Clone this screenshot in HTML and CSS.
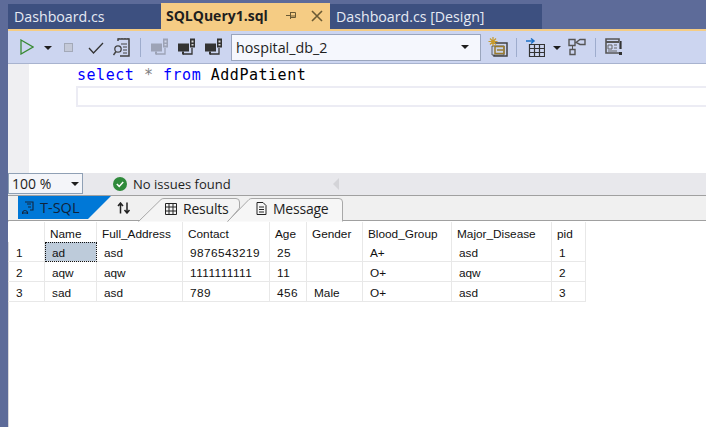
FILE: index.html
```html
<!DOCTYPE html>
<html lang="en">
<head>
<meta charset="utf-8">
<title>SQLQuery1.sql</title>
<link rel="stylesheet" href="styles.css">
</head>
<body>
<div class="shell">
  <div class="tabs">
    <div class="tab t1">Dashboard.cs</div>
    <div class="tab active t2"><span class="tname">SQLQuery1.sql</span>
      <svg class="pin" width="11" height="9" viewBox="0 0 11 9"><path d="M0 4.5h4M4.5 1v7M4.5 1.500h5v5h-5M4.5 5h5" fill="none" stroke="#6a5a34"/></svg>
      <svg class="close" width="12" height="12" viewBox="0 0 12 12"><path d="M1 1l10 10M11 1L1 11" fill="none" stroke="#6a5a34" stroke-width="1.600"/></svg>
    </div>
    <div class="tab t3">Dashboard.cs [Design]</div>
  </div>
  <div class="toolbar">
    <svg class="run" width="14" height="16" viewBox="0 0 14 16"><path d="M1 1l12 7-12 7z" fill="none" stroke="#388a34" stroke-width="1.300"/></svg>
    <span class="caret c1"></span>
    <span class="stop"></span>
    <svg class="check" width="16" height="12" viewBox="0 0 16 12"><path d="M1 6l4.500 5L15 1" fill="none" stroke="#333" stroke-width="1.300"/></svg>
    <svg class="parse" width="17" height="19" viewBox="0 0 17 19"><path d="M5 3V1h11v17H7" fill="none" stroke="#424242" stroke-width="1.500"/><path d="M6 1V0M9 1V0M12 1V0M15 1V0" stroke="#424242"/><path d="M8 6h6M10 9h4M10 12h4M10 15h4" stroke="#424242"/><circle cx="5" cy="11" r="3.200" fill="none" stroke="#424242" stroke-width="1.300"/><path d="M3 13.500L.5 17" stroke="#424242" stroke-width="1.500"/></svg>
    <span class="sep s1"></span>
    <svg class="conn dim" width="19" height="18" viewBox="0 0 19 18"><use href="#plug"/></svg>
    <svg class="conn" width="19" height="18" viewBox="0 0 19 18"><use href="#plug"/></svg>
    <svg class="conn" width="19" height="18" viewBox="0 0 19 18"><use href="#plug"/></svg>
    <div class="dbselect"><span>hospital_db_2</span><span class="caret"></span></div>
    <svg class="newq" width="20" height="20" viewBox="0 0 20 20"><path d="M7 6h12v13H6V9" fill="none" stroke="#424242" stroke-width="1.500"/><path d="M4 9h12v9H4z" fill="#c8d3ec" stroke="#424242" stroke-opacity=".8"/><path d="M7 9.500h9v7H7z" fill="none" stroke="#9a7b2c" stroke-width="1.500"/><path d="M9 13h6" stroke="#9a7b2c" stroke-width="1.500"/><path d="M5 0v9M.5 4.500h9M2 1.500l6 6M8 1.500l-6 6" stroke="#c79a2b" stroke-width="1.200"/></svg>
    <span class="sep s2"></span>
    <svg class="grid-ic" width="19" height="19" viewBox="0 0 19 19"><path d="M3.500 6.500h15v12h-15zM3.500 10.500h15M3.500 14.500h15M8.500 6.500v12M13.500 6.500v12" fill="none" stroke="#333" stroke-width="1.200"/><path d="M0 3h7M5 .5L8 3 5 5.500" fill="none" stroke="#1e72c8" stroke-width="1.500"/></svg>
    <span class="caret c2"></span>
    <svg class="plan" width="18" height="18" viewBox="0 0 18 18"><path d="M1 1.500h6v6H1zM2 11.500h5v5H2z" fill="none" stroke="#555" stroke-width="1.400"/><path d="M4.500 8v3" stroke="#555"/><path d="M8 4.500l4-3h5v5h-5z" fill="none" stroke="#555" stroke-width="1.400"/></svg>
    <span class="sep s3"></span>
    <svg class="opts" width="18" height="18" viewBox="0 0 18 18"><path d="M14 3V1H1v14h13" fill="none" stroke="#555" stroke-width="1.600"/><path d="M1 4h13" stroke="#555" stroke-width="2"/><path d="M3 7h4v4H3zM9 7h3M9 10h3M3 13h9" fill="none" stroke="#666"/><path d="M15.500 3v8" stroke="#333" stroke-width="2.200"/><path d="M14 14h3v3h-3z" fill="#333"/></svg>
  </div>
  <div class="editor">
    <div class="gutter"></div>
    <div class="code">
      <div class="codeline"><span class="kw">select</span> <span class="star">*</span> <span class="kw">from</span> AddPatient</div>
      <div class="current"></div>
    </div>
  </div>
  <div class="status">
    <div class="zoomsel"><span>100 %</span><span class="caret"></span></div>
    <svg class="ok" width="14" height="14" viewBox="0 0 14 14"><circle cx="7" cy="7" r="7" fill="#2f8a3b"/><path d="M3.800 7l2.400 2.400L10.200 5" fill="none" stroke="#fff" stroke-width="1.500"/></svg>
    <span class="issues">No issues found</span>
    <span class="scroll-left"></span>
  </div>
  <div class="resulttabs">
    <div class="tsql">
      <svg width="13" height="13" viewBox="0 0 13 13"><path d="M3 1h8v8H8M1 12h5M3 9.500a2.500 2.500 0 1 0 .1 0M5 3h4M6 6h3" fill="none" stroke="#12263f" stroke-width="1.100"/></svg>
      <span>T-SQL</span>
    </div>
    <svg class="sort" width="14" height="12" viewBox="0 0 14 12"><path d="M3.500 11.500V1.500M1 4l2.500-3L6 4M10 .5v10M7.500 8l2.500 3 2.500-3" fill="none" stroke="#222" stroke-width="1.500"/></svg>
    <div class="rtab results">
      <svg class="tabshape" width="102" height="26" viewBox="0 0 102 26"><path d="M.5 25.500L23 3.500Q24 2.500 26 2.500H98Q101.500 2.500 101.500 6V12L90 25.500" fill="#f4f4f4" stroke="#a8a8a8"/></svg>
      <svg class="tabicon" width="12" height="12" viewBox="0 0 12 12"><path d="M.5.500h11v11H.5zM.5 4h11M.5 8h11M4 .5v11M8 .5v11" fill="none" stroke="#222"/></svg>
      <span>Results</span>
    </div>
    <div class="rtab message">
      <svg class="tabshape" width="116" height="26" viewBox="0 0 116 26"><path d="M.5 25.500L22 3.500Q23 2.500 25 2.500H112Q115.500 2.500 115.500 6V25.500" fill="#f6f6f6" stroke="#a8a8a8"/></svg>
      <svg class="tabicon" width="11" height="13" viewBox="0 0 11 13"><path d="M1 .5h6l3 3v9H1zM3 5h5M3 7.500h5M3 10h5" fill="none" stroke="#222"/></svg>
      <span>Message</span>
    </div>
  </div>
  <div class="tablewrap">
    <table class="data">
      <colgroup><col class="k0"><col class="k1"><col class="k2"><col class="k3"><col class="k4"><col class="k5"><col class="k6"><col class="k7"><col class="k8"></colgroup>
      <thead><tr><th></th><th>Name</th><th>Full_Address</th><th>Contact</th><th>Age</th><th>Gender</th><th>Blood_Group</th><th>Major_Disease</th><th>pid</th></tr></thead>
      <tbody>
        <tr><td class="num d">1</td><td class="sel">ad</td><td>asd</td><td class="d">9876543219</td><td class="d">25</td><td></td><td>A+</td><td>asd</td><td class="d">1</td></tr>
        <tr><td class="num d">2</td><td>aqw</td><td>aqw</td><td class="d">1111111111</td><td class="d">11</td><td></td><td>O+</td><td>aqw</td><td class="d">2</td></tr>
        <tr><td class="num d">3</td><td>sad</td><td>asd</td><td class="d">789</td><td class="d">456</td><td>Male</td><td>O+</td><td>asd</td><td class="d">3</td></tr>
      </tbody>
    </table>
  </div>
</div>
<svg class="defs" width="0" height="0"><defs><g id="plug"><path d="M1 5.500h11v8H1z" fill="currentColor"/><path d="M6 13.500v3" stroke="currentColor" stroke-width="2"/><path d="M6 16h9v-6" fill="none" stroke="currentColor" stroke-width="1.300"/><path d="M13 .5h5v9h-5z" fill="currentColor"/><path d="M14.500 2.500h2v2h-2zM14.500 6h2v1.500h-2z" fill="#fff" fill-opacity=".8"/></g></defs></svg>
</body>
</html>
```
FILE: styles.css
```css
* { box-sizing: border-box; }
html, body { margin: 0; padding: 0; width: 706px; height: 427px; overflow: hidden; background: #5d6b99; }
.shell { margin-left: 8px; height: 427px; background: #fff; display: flex; flex-direction: column; font-family: "Open Sans", "Noto Sans", sans-serif; color: #1e1e1e; }
.defs { position: absolute; }

.tabs { height: 31px; flex: none; background: #5d6b99; display: flex; align-items: flex-end; border-bottom: 2px solid #f5cc84; }
.tab { height: 25px; display: flex; align-items: center; padding-bottom: 1px; font-size: 14.2px; color: #e6eaf3; background: #3d5080; padding-left: 6px; }
.t1 { width: 153px; }
.t2 { width: 169px; height: 26px; background: #f5cc84; color: #1e1e1e; font-weight: 700; font-size: 14px; padding-left: 5px; }
.t3 { width: 212px; }
.tname { width: 120px; }
.pin { margin-right: 14px; flex: none; }
.close { flex: none; }

.toolbar { height: 33px; flex: none; background: #ccd5f0; border-bottom: 1px solid #a8b3cf; display: flex; align-items: center; }
.toolbar > svg { flex: none; color: #333; }
.run { margin-left: 12px; }
.caret { display: block; width: 0; height: 0; border-left: 4px solid transparent; border-right: 4px solid transparent; border-top: 4px solid #1e1e1e; flex: none; }
.c1 { margin-left: 10px; margin-top: 2px; }
.stop { width: 9px; height: 9px; border: 1px solid #a3a9b8; background: #c4c9d8; margin-left: 12px; flex: none; }
.check { margin-left: 15px; margin-top: 2px; }
.parse { margin-left: 9px; }
.sep { width: 1px; height: 19px; background: #9eaccd; flex: none; }
.s1 { margin-left: 10px; }
.conn { margin-left: 8px; }
.conn.dim { opacity: .3; margin-left: 9px; }
.dbselect { width: 250px; height: 27px; margin-left: 8px; background: #f5f7fd; border: 1px solid #9aa5bd; display: flex; align-items: center; justify-content: space-between; padding: 0 11px 0 4px; font-size: 14.300px; color: #1e1e1e; }
.newq { margin-left: 7px; }
.s2 { margin-left: 8px; }
.grid-ic { margin-left: 9px; }
.c2 { margin-left: 8px; margin-top: 2px; }
.plan { margin-left: 7px; }
.s3 { margin-left: 9px; }
.opts { margin-left: 9px; }

.editor { flex: none; height: 109px; display: flex; background: #fff; }
.gutter { width: 21px; background: #efeff2; }
.code { flex: 1; padding-left: 47px; overflow: hidden; }
.codeline { height: 22px; padding-left: 1px; font: 15px/22px "DejaVu Sans Mono", monospace; letter-spacing: .52px; color: #000; white-space: pre; }
.kw { color: #0000ff; }
.star { color: #808080; }
.current { height: 21px; margin-right: -3px; border: 2px solid #ececf4; }

.status { flex: none; height: 23px; background: #e8e8ec; display: flex; align-items: flex-start; border-bottom: 1px solid #a0a0a0; }
.zoomsel { width: 75px; height: 21px; border: 1px solid #8fa0b5; background: #f4f5f9; display: flex; align-items: center; justify-content: space-between; padding: 0 3px 0 3px; font-size: 14px; }
.ok { margin: 4px 0 0 30px; flex: none; }
.issues { margin: 1px 0 0 6px; font-size: 13px; line-height: 20px; }
.scroll-left { width: 0; height: 0; border-top: 6px solid transparent; border-bottom: 6px solid transparent; border-right: 6px solid #d4d4d8; margin: 5px 0 0 102px; }

.resulttabs { flex: none; height: 25px; background: #f0f0f0; border-bottom: 1px solid #a0a0a0; display: flex; align-items: flex-start; font-size: 14px; }
.tsql { width: 93px; height: 23px; margin-left: 10px; background: #0078d7; color: #10233a; font-size: 14.500px; display: flex; align-items: center; gap: 5px; padding-left: 4px; clip-path: polygon(0 0, 100% 0, 70px 100%, 0 100%); }
.sort { margin: 6px 0 0 6px; flex: none; }
.rtab { height: 25px; display: flex; align-items: center; position: relative; }
.rtab > span, .tabicon { position: relative; flex: none; }
.tabshape { position: absolute; left: 0; top: 0; }
.results { width: 102px; margin-left: 7px; padding-left: 27px; gap: 6px; letter-spacing: -.2px; }
.message { width: 116px; margin-left: -13px; padding-left: 29px; gap: 6px; letter-spacing: -.23px; }

.tablewrap { flex: 1; background: #fff; padding-top: 1px; box-shadow: inset 1px 0 #d8d8dc; }
.data { border-collapse: separate; border-spacing: 0; table-layout: fixed; width: 578px; font-family: "Liberation Sans", sans-serif; font-size: 11.800px; color: #111; }
.k0 { width: 37px; } .k1 { width: 52px; } .k2 { width: 86px; } .k3 { width: 87px; } .k4 { width: 37px; } .k5 { width: 56px; } .k6 { width: 89px; } .k7 { width: 100px; } .k8 { width: 34px; }
.data th { height: 20px; font-weight: 400; text-align: left; padding: 4px 0 0 5px; border-right: 1px solid #e8e8e8; background: #fff; }
.data td { height: 20px; padding: 2px 0 0 7px; border-right: 1px solid #e8e8e8; border-bottom: 1px solid #e8e8e8; }
.data td.num { padding-left: 8px; }
.data td.d { letter-spacing: .44px; }
.data td.sel { background: #bdcbda; outline: 1px dotted #111; outline-offset: -1px; }
```
